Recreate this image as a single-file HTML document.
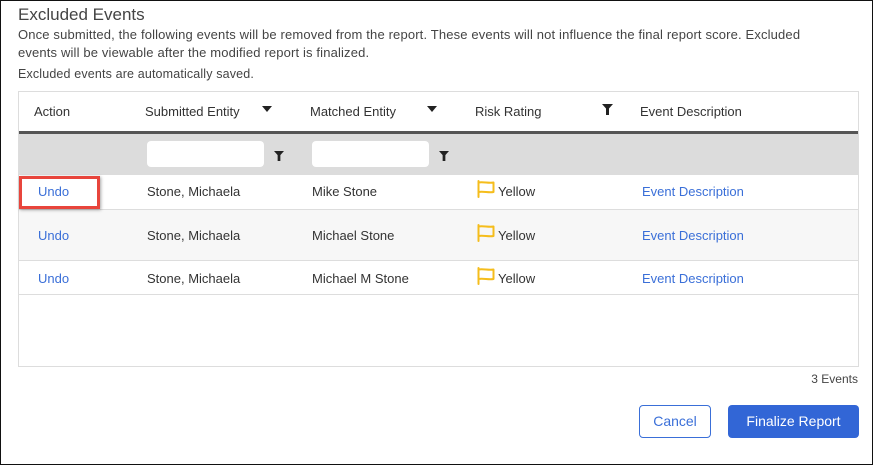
<!DOCTYPE html>
<html><head><style>
*{box-sizing:border-box;margin:0;padding:0}
body{width:873px;height:465px;overflow:hidden;background:#fff;font-family:"Liberation Sans",sans-serif;color:#333;position:relative}
.frame{position:absolute;left:0;top:0;width:873px;height:465px;border:1px solid #111}
.a{position:absolute;white-space:nowrap}
.t{font-size:13px}
.link{color:#3a6fd8}
.tri{position:absolute;width:0;height:0;border-left:5px solid transparent;border-right:5px solid transparent;border-top:6px solid #222}
.fil{position:absolute}
</style></head><body>
<div class="frame"></div>
<div class="a" style="left:18px;top:5px;font-size:17px;color:#444">Excluded Events</div>
<div class="a t" style="left:18px;top:26px;color:#444;line-height:18px;letter-spacing:0.15px">Once submitted, the following events will be removed from the report. These events will not influence the final report score. Excluded<br>events will be viewable after the modified report is finalized.</div>
<div class="a" style="left:18px;top:67px;font-size:12.5px;color:#444;letter-spacing:0.15px">Excluded events are automatically saved.</div>

<div class="a" style="left:18px;top:91px;width:841px;height:276px;border:1px solid #ddd"></div>
<div class="a" style="left:19px;top:131px;width:839px;height:3px;background:#555"></div>
<div class="a" style="left:19px;top:134px;width:839px;height:41px;background:#dcdcdc"></div>
<div class="a" style="left:19px;top:209px;width:839px;height:1px;background:#ddd"></div>
<div class="a" style="left:19px;top:210px;width:839px;height:50px;background:#f7f7f7"></div>
<div class="a" style="left:19px;top:260px;width:839px;height:1px;background:#ddd"></div>
<div class="a" style="left:19px;top:294px;width:839px;height:1px;background:#ddd"></div>

<div class="a t" style="left:34px;top:104px">Action</div>
<div class="a t" style="left:145px;top:104px">Submitted Entity</div>
<div class="tri" style="left:262px;top:106px"></div>
<div class="a t" style="left:310px;top:104px">Matched Entity</div>
<div class="tri" style="left:427px;top:106px"></div>
<div class="a t" style="left:475px;top:104px">Risk Rating</div>
<svg class="fil" style="left:602px;top:104px" width="11" height="11" viewBox="0 0 11 11"><path d="M0 0H11L7 4.5V11H4V4.5Z" fill="#222"/></svg>
<div class="a t" style="left:640px;top:104px">Event Description</div>

<div class="a" style="left:147px;top:141px;width:117px;height:26px;background:#fff;border-radius:4px"></div>
<svg class="fil" style="left:274px;top:151px" width="10" height="10" viewBox="0 0 11 11"><path d="M0 0H11L7 4.5V11H4V4.5Z" fill="#222"/></svg>
<div class="a" style="left:312px;top:141px;width:117px;height:26px;background:#fff;border-radius:4px"></div>
<svg class="fil" style="left:439px;top:151px" width="10" height="10" viewBox="0 0 11 11"><path d="M0 0H11L7 4.5V11H4V4.5Z" fill="#222"/></svg>

<div class="a t link" style="left:38px;top:184px">Undo</div>
<div class="a t" style="left:147px;top:184px">Stone, Michaela</div>
<div class="a t" style="left:312px;top:184px">Mike Stone</div>
<div class="a t link" style="left:642px;top:184px">Event Description</div>

<div class="a t link" style="left:38px;top:228px">Undo</div>
<div class="a t" style="left:147px;top:228px">Stone, Michaela</div>
<div class="a t" style="left:312px;top:228px">Michael Stone</div>
<div class="a t link" style="left:642px;top:228px">Event Description</div>

<div class="a t link" style="left:38px;top:271px">Undo</div>
<div class="a t" style="left:147px;top:271px">Stone, Michaela</div>
<div class="a t" style="left:312px;top:271px">Michael M Stone</div>
<div class="a t link" style="left:642px;top:271px">Event Description</div>

<svg class="fil" style="left:477px;top:180px" width="20" height="18" viewBox="0 0 20 18"><path d="M1.5 1V17M1.5 2.5C6 1.5 12 3.5 16.5 2.5V12C12 13 6 11 1.5 12" fill="none" stroke="#f5bd1c" stroke-width="2" stroke-linejoin="round" stroke-linecap="round"/></svg>
<div class="a t" style="left:498px;top:184px">Yellow</div>
<svg class="fil" style="left:477px;top:224px" width="20" height="18" viewBox="0 0 20 18"><path d="M1.5 1V17M1.5 2.5C6 1.5 12 3.5 16.5 2.5V12C12 13 6 11 1.5 12" fill="none" stroke="#f5bd1c" stroke-width="2" stroke-linejoin="round" stroke-linecap="round"/></svg>
<div class="a t" style="left:498px;top:228px">Yellow</div>
<svg class="fil" style="left:477px;top:267px" width="20" height="18" viewBox="0 0 20 18"><path d="M1.5 1V17M1.5 2.5C6 1.5 12 3.5 16.5 2.5V12C12 13 6 11 1.5 12" fill="none" stroke="#f5bd1c" stroke-width="2" stroke-linejoin="round" stroke-linecap="round"/></svg>
<div class="a t" style="left:498px;top:271px">Yellow</div>

<div class="a" style="left:19px;top:176px;width:81px;height:33px;border:3px solid #e8453c;box-shadow:1px 1px 3px rgba(0,0,0,.35)"></div>

<div class="a" style="left:700px;top:372px;width:158px;text-align:right;font-size:12px;color:#444">3 Events</div>

<div class="a" style="left:639px;top:405px;width:72px;height:33px;border:1px solid #3a6fd8;border-radius:4px;color:#3a6fd8;font-size:14px;text-align:center;line-height:31px">Cancel</div>
<div class="a" style="left:728px;top:405px;width:131px;height:33px;background:#3266d6;border-radius:4px;color:#fff;font-size:14px;text-align:center;line-height:33px">Finalize Report</div>
</body></html>
